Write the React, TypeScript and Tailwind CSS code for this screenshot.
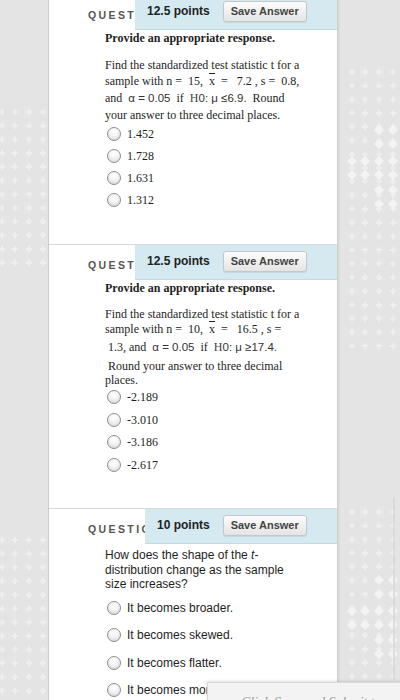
import React from "react";

const serif = "font-['Liberation_Serif','Times_New_Roman',serif]";
const sans = "font-['Liberation_Sans',Arial,sans-serif]";

const Radio = () => (
  <span className="inline-block h-[14px] w-[14px] flex-none rounded-full border border-[#8e8e8e] bg-[radial-gradient(circle_at_50%_30%,#ffffff_0%,#f3f3f3_45%,#cdcdcd_100%)]" />
);

const Option = ({ text, font, h }: { text: string; font: string; h: string }) => (
  <div className={`flex items-center gap-[6px] pl-[2px] ${h}`}>
    <Radio />
    <span className={`${font} whitespace-nowrap text-[12px] text-[#1e1e1e]`}>{text}</span>
  </div>
);

const Header = ({ label, points, labelW, clip }: { label: string; points: string; labelW: string; clip?: boolean }) => (
  <div className={clip ? "h-[30px] overflow-hidden" : "h-[35px]"}>
    <div className={`flex h-[35px] ${clip ? "-mt-[5px]" : ""}`}>
      <div className={`${labelW} flex-none overflow-hidden whitespace-nowrap pl-[39px] pt-[6px]`}>
        <span className={`${sans} text-[10.5px] font-bold leading-4 tracking-[2.4px] text-[#555]`}>{label}</span>
      </div>
      <div className="flex flex-1 items-start border-b border-[#c2dae2] bg-[#d4e9f0] pl-[12px] pt-[6px]">
        <span className={`${sans} text-[12px] font-bold leading-[20px] text-[#222]`}>{points}</span>
        <button className={`${sans} ml-[13px] flex h-[21px] w-[84px] items-center justify-center rounded-[3px] border border-[#c6c6c6] bg-linear-to-b from-[#fdfdfd] to-[#e4e4e4] text-[11px] font-bold text-[#444] shadow-[0_1px_1px_rgba(0,0,0,0.08)]`}>
          Save Answer
        </button>
      </div>
    </div>
  </div>
);

const Sans = ({ children }: { children: React.ReactNode }) => (
  <span className={`${sans} text-[11.5px] text-[#333]`}>{children}</span>
);

type Dot = [number, number];

const Gutter = ({ w, cols, bands, diamonds = [], scroll }: { w: number; cols: number[]; bands: [number, number][]; diamonds?: Dot[]; scroll?: boolean }) => {
  const plus: React.ReactNode[] = [];
  bands.forEach(([a, b], bi) => {
    for (let y = a; y <= b; y += 13.7) {
      cols.forEach((x, ci) => {
        plus.push(
          <path key={`${bi}-${ci}-${y}`} d={`M${x - 3} ${y}h6M${x} ${y - 3}v6`} stroke="#eeeeee" strokeWidth="2" />
        );
      });
    }
  });
  return (
    <svg width={w} height={700} className="flex-none">
      {plus}
      {diamonds.map(([x, y]) => (
        <path key={`d-${x}-${y}`} d={`M${x} ${y - 5}L${x + 5} ${y}L${x} ${y + 5}L${x - 5} ${y}Z`} fill="#f3f3f3" />
      ))}
      {scroll && <line x1={w - 6} y1={497} x2={w - 6} y2={680} stroke="#d6d6d6" strokeWidth="1.5" />}
    </svg>
  );
};

const rightDiamonds: Dot[] = [
  [41, 130], [55, 130], [41, 144], [55, 144],
  [14, 161], [27, 161], [41, 161], [55, 161],
  [14, 175], [27, 175], [41, 175], [55, 175],
  [41, 190], [55, 190], [41, 204], [55, 204],
  [41, 580], [55, 580], [41, 594], [55, 594],
  [14, 611], [27, 611], [41, 611], [55, 611],
  [14, 625], [27, 625], [41, 625], [55, 625],
  [41, 640], [55, 640], [41, 654], [55, 654],
];

export default function App() {
  return (
    <div className="relative flex h-[700px] w-[400px] overflow-hidden bg-[#e4e4e4]">
      <Gutter w={48} cols={[2, 15, 29, 43]} bands={[[112, 272], [540, 700]]} />

      <main className="w-[290px] flex-none border-l border-r border-l-[#cbcbcb] border-r-[#cfcfcf] bg-white shadow-[1px_0_2px_rgba(0,0,0,0.08)]">
        {/* question 1 */}
        <section className="h-[244px]">
          <Header label="QUESTION 3" points="12.5 points" labelW="w-[86px]" clip />
          <div className={`${serif} pl-[56px] text-[12px] text-[#1e1e1e]`}>
            <div className="h-[16px] font-bold leading-[16px]">Provide an appropriate response.</div>
            <div className="mt-[11px] h-[16px] leading-[16px]">Find the standardized test statistic t for a</div>
            <div className="h-[16px] whitespace-pre leading-[16px]">
              sample with n =  15,  <span className="overline">x</span>  =   7.2 , s =  0.8,
            </div>
            <div className="h-[18px] whitespace-pre leading-[18px]">
              and  <Sans>α = 0.05</Sans>  if  <span className="text-[#444]">H</span><Sans>0: μ ≤6.9.</Sans>  Round
            </div>
            <div className="h-[16px] leading-[16px]">your answer to three decimal places.</div>
          </div>
          <div className="pl-[56px]">
            {["1.452", "1.728", "1.631", "1.312"].map((t) => (
              <Option key={t} text={t} font={serif} h="h-[22px]" />
            ))}
          </div>
        </section>

        {/* question 2 */}
        <section className="h-[264px] border-t border-[#d9d9d9]">
          <Header label="QUESTION 4" points="12.5 points" labelW="w-[86px]" />
          <div className={`${serif} pl-[56px] text-[12px] text-[#1e1e1e]`}>
            <div className="h-[16px] font-bold leading-[16px]">Provide an appropriate response.</div>
            <div className="mt-[11px] h-[15px] leading-[15px]">Find the standardized test statistic t for a</div>
            <div className="h-[15px] whitespace-pre leading-[15px]">
              sample with n =  10,  <span className="overline">x</span>  =   16.5 , s =
            </div>
            <div className="h-[21px] whitespace-pre leading-[21px]">
              {" "}1.3, and  <Sans>α = 0.05</Sans>  if  <span className="text-[#444]">H</span><Sans>0: μ ≥17.4.</Sans>
            </div>
            <div className="h-[16px] whitespace-pre leading-[16px]"> Round your answer to three decimal</div>
            <div className="h-[12px] leading-[12px]">places.</div>
          </div>
          <div className="pl-[56px]">
            {["-2.189", "-3.010", "-3.186", "-2.617"].map((t) => (
              <Option key={t} text={t} font={serif} h="h-[22.5px]" />
            ))}
          </div>
        </section>

        {/* question 3 */}
        <section className="border-t border-[#d9d9d9]">
          <Header label="QUESTION 5" points="10 points" labelW="w-[96px]" />
          <div className={`${sans} mt-[4px] pl-[56px] text-[12px] leading-[14.5px] text-[#1e1e1e]`}>
            <div>How does the shape of the <i>t</i>-</div>
            <div>distribution change as the sample</div>
            <div>size increases?</div>
          </div>
          <div className="mt-[3px] pl-[56px]">
            {["It becomes broader.", "It becomes skewed.", "It becomes flatter.", "It becomes more normal."].map((t) => (
              <Option key={t} text={t} font={sans} h="h-[27.3px]" />
            ))}
          </div>
        </section>
      </main>

      <Gutter w={62} cols={[14, 27, 41, 55]} bands={[[72, 350], [512, 690]]} diamonds={rightDiamonds} scroll />

      <div className="absolute bottom-0 left-[207px] right-0 top-[682px] border-l border-t border-[#d8d8d8] bg-[#f3f3f3] pl-[33px] pt-[6px] shadow-[0_-1px_3px_rgba(0,0,0,0.12)]">
        <span className={`${serif} whitespace-nowrap text-[14px] italic leading-4 text-[#9c9c9c]`}>
          Click Save and Submit to save and submit.
        </span>
      </div>
    </div>
  );
}
